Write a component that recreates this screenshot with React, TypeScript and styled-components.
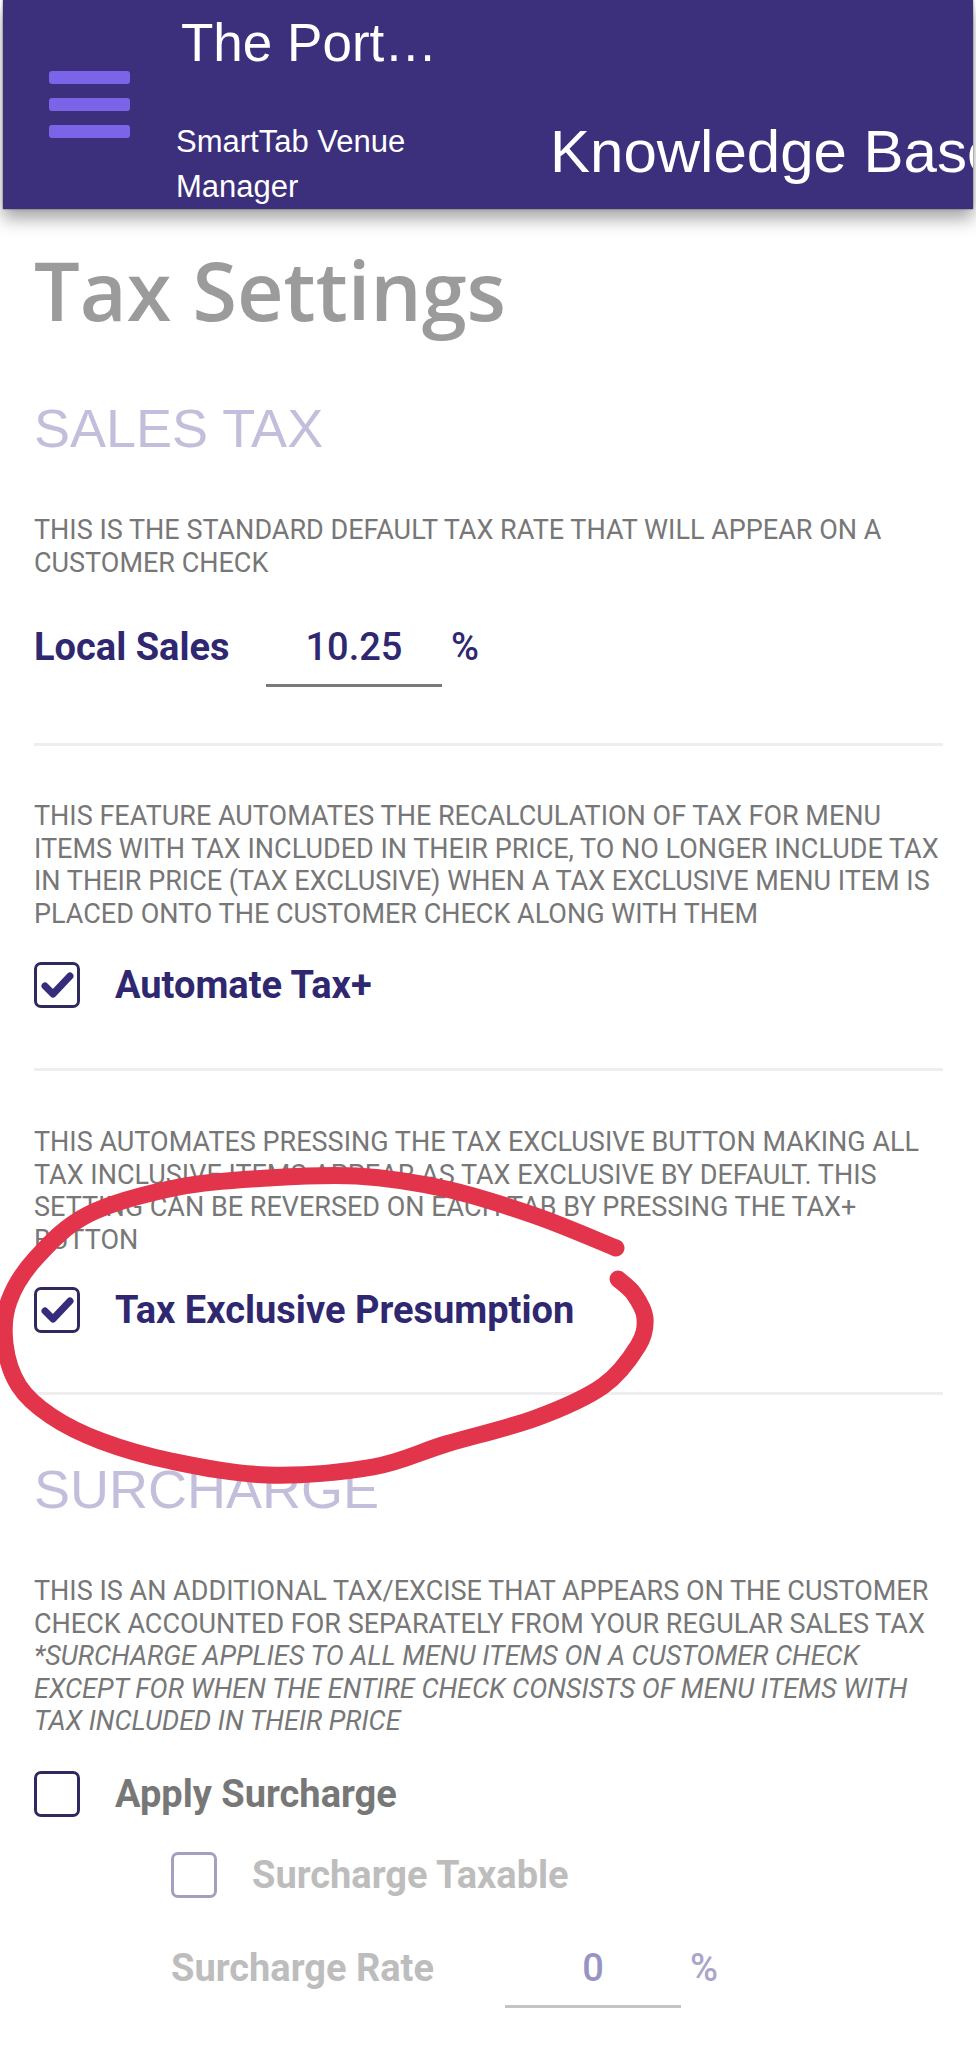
import React from 'react';
import styled, { createGlobalStyle } from 'styled-components';

const GlobalStyle = createGlobalStyle`
  html, body {
    margin: 0;
    padding: 0;
    background: #fff;
  }
  body {
    font-family: Roboto, 'Liberation Sans', sans-serif;
  }
`;

const navy = '#2f2870';

const Page = styled.div`
  position: relative;
  width: 976px;
  min-height: 2048px;
  overflow: hidden;
  background: #fff;
`;

const TopBar = styled.header`
  position: relative;
  z-index: 1;
  display: flex;
  align-items: center;
  height: 209px;
  margin: 0 3px;
  padding-left: 46px;
  background: #3c2f7b;
  color: #fff;
  font-family: 'Liberation Sans', Arial, sans-serif;
  box-shadow: 0 0 2px rgba(0, 0, 0, 0.55), 0 10px 16px rgba(0, 0, 0, 0.35);
  overflow: hidden;
`;

const Burger = styled.div`
  display: flex;
  flex-direction: column;
  gap: 14px;
  width: 81px;
  flex-shrink: 0;

  span {
    height: 13px;
    border-radius: 3px;
    background: #7b64e8;
  }
`;

const Brand = styled.div`
  display: flex;
  flex-direction: column;
  align-self: stretch;
  margin-left: 46px;
`;

const VenueName = styled.div`
  margin-top: 16px;
  padding-left: 5px;
  font-size: 53px;
  line-height: 53px;
  white-space: nowrap;
`;

const BrandRow = styled.div`
  display: flex;
  align-items: flex-start;
  margin-top: 50px;
`;

const Product = styled.div`
  width: 250px;
  flex-shrink: 0;
  font-size: 31px;
  line-height: 45px;
`;

const NavLink = styled.a`
  margin: 3px 0 0 124px;
  font-size: 60px;
  line-height: 60px;
  color: #fff;
  text-decoration: none;
  white-space: nowrap;
`;

const Main = styled.main`
  padding: 0 33px 40px 34px;
`;

const Heading = styled.h1`
  margin: 33px 0 0;
  font-family: 'Open Sans', sans-serif;
  font-weight: 600;
  font-size: 81px;
  line-height: 96px;
  color: #9b9b9b;
`;

const SectionTitle = styled.h2<{ $mt: number }>`
  margin: ${(p) => p.$mt}px 0 0;
  font-family: 'Liberation Sans', Arial, sans-serif;
  font-weight: 400;
  font-size: 54px;
  line-height: 60px;
  color: #c2bedb;
`;

const Help = styled.p<{ $mt?: number }>`
  margin: ${(p) => p.$mt ?? 55}px 0 0;
  font-family: Roboto, sans-serif;
  font-size: 27px;
  line-height: 32.5px;
  color: #777;
`;

const Footnote = styled.span`
  display: block;
  font-style: italic;
`;

const Divider = styled.hr<{ $mt: number }>`
  margin: ${(p) => p.$mt}px 0 0;
  height: 3px;
  border: 0;
  background: #eee;
`;

type Tone = 'active' | 'plain' | 'disabled';

const labelColor: Record<Tone, string> = {
  active: navy,
  plain: '#777',
  disabled: '#bdbdbd',
};

const RateRow = styled.div<{ $mt: number; $indent?: number }>`
  display: flex;
  align-items: flex-start;
  margin: ${(p) => p.$mt}px 0 0 ${(p) => p.$indent ?? 0}px;
  font-family: Roboto, sans-serif;
  font-size: 38px;
  line-height: 44px;
`;

const RateLabel = styled.span<{ $width: number; $tone: Tone }>`
  width: ${(p) => p.$width}px;
  flex-shrink: 0;
  font-weight: 700;
  color: ${(p) => labelColor[p.$tone]};
`;

const RateValue = styled.span<{ $tone: Tone }>`
  width: 176px;
  padding-bottom: 15px;
  text-align: center;
  font-weight: 500;
  color: ${(p) => (p.$tone === 'disabled' ? '#9893c4' : navy)};
  border-bottom: 3px solid ${(p) => (p.$tone === 'disabled' ? '#c4c4c4' : '#7a7a7a')};
`;

const Percent = styled.span<{ $tone: Tone }>`
  width: 46px;
  text-align: center;
  font-weight: 500;
  color: ${(p) => (p.$tone === 'disabled' ? '#a9a5cc' : navy)};
`;

const CheckRow = styled.label<{ $mt: number; $indent?: number }>`
  display: flex;
  align-items: center;
  gap: 35px;
  margin: ${(p) => p.$mt}px 0 0 ${(p) => p.$indent ?? 0}px;
  font-family: Roboto, sans-serif;
`;

const Box = styled.span<{ $tone: Tone }>`
  display: flex;
  width: 46px;
  height: 46px;
  box-sizing: border-box;
  flex-shrink: 0;
  border: 3px solid ${(p) => (p.$tone === 'disabled' ? '#a3a0bf' : '#2f2a5e')};
  border-radius: 7px;

  svg {
    width: 40px;
    height: 40px;
  }
`;

const CheckText = styled.span<{ $tone: Tone }>`
  font-weight: 700;
  font-size: 38px;
  line-height: 44px;
  color: ${(p) => labelColor[p.$tone]};
`;

const Scribble = styled.svg`
  position: absolute;
  top: 0;
  left: 0;
  z-index: 2;
  pointer-events: none;
`;

function Checkbox({ checked, tone, label, mt, indent }: {
  checked?: boolean;
  tone: Tone;
  label: string;
  mt: number;
  indent?: number;
}) {
  return (
    <CheckRow $mt={mt} $indent={indent}>
      <Box $tone={tone}>
        {checked && (
          <svg viewBox="0 0 40 40">
            <polyline
              points="8,21 16,29 33,11"
              fill="none"
              stroke="#352c7c"
              strokeWidth="7"
              strokeLinecap="round"
              strokeLinejoin="round"
            />
          </svg>
        )}
      </Box>
      <CheckText $tone={tone}>{label}</CheckText>
    </CheckRow>
  );
}

function Rate({ label, value, labelWidth, tone, mt, indent }: {
  label: string;
  value: string;
  labelWidth: number;
  tone: Tone;
  mt: number;
  indent?: number;
}) {
  return (
    <RateRow $mt={mt} $indent={indent}>
      <RateLabel $width={labelWidth} $tone={tone}>{label}</RateLabel>
      <RateValue $tone={tone}>{value}</RateValue>
      <Percent $tone={tone}>%</Percent>
    </RateRow>
  );
}

// marker loop drawn around the presumption option
const loop: [number, number][] = [
  [616, 1248], [536, 1216], [446, 1189], [357, 1176], [268, 1178],
  [179, 1187], [89, 1214], [36, 1258], [9, 1301], [5, 1344],
  [19, 1386], [51, 1416], [101, 1441], [171, 1461], [268, 1475],
  [373, 1467], [446, 1444], [536, 1418], [603, 1386], [638, 1346],
  [645, 1318], [634, 1294], [618, 1279],
];

function smoothPath(pts: [number, number][]): string {
  let d = `M ${pts[0][0]} ${pts[0][1]}`;
  for (let i = 0; i < pts.length - 1; i++) {
    const p0 = pts[i - 1] ?? pts[i];
    const p1 = pts[i];
    const p2 = pts[i + 1];
    const p3 = pts[i + 2] ?? p2;
    const c1x = p1[0] + (p2[0] - p0[0]) / 6;
    const c1y = p1[1] + (p2[1] - p0[1]) / 6;
    const c2x = p2[0] - (p3[0] - p1[0]) / 6;
    const c2y = p2[1] - (p3[1] - p1[1]) / 6;
    d += ` C ${c1x} ${c1y} ${c2x} ${c2y} ${p2[0]} ${p2[1]}`;
  }
  return d;
}

export default function App() {
  return (
    <Page>
      <GlobalStyle />
      <TopBar>
        <Burger>
          <span />
          <span />
          <span />
        </Burger>
        <Brand>
          <VenueName>The Port…</VenueName>
          <BrandRow>
            <Product>SmartTab Venue Manager</Product>
            <NavLink href="#">Knowledge Base</NavLink>
          </BrandRow>
        </Brand>
      </TopBar>

      <Main>
        <Heading>Tax Settings</Heading>

        <SectionTitle $mt={60}>SALES TAX</SectionTitle>
        <Help $mt={56}>THIS IS THE STANDARD DEFAULT TAX RATE THAT WILL APPEAR ON A CUSTOMER CHECK</Help>
        <Rate label="Local Sales" value="10.25" labelWidth={232} tone="active" mt={46} />

        <Divider $mt={56} />
        <Help $mt={54}>
          THIS FEATURE AUTOMATES THE RECALCULATION OF TAX FOR MENU ITEMS WITH TAX INCLUDED IN THEIR
          PRICE, TO NO LONGER INCLUDE TAX IN THEIR PRICE (TAX EXCLUSIVE) WHEN A TAX EXCLUSIVE MENU
          ITEM IS PLACED ONTO THE CUSTOMER CHECK ALONG WITH THEM
        </Help>
        <Checkbox checked tone="active" label="Automate Tax+" mt={32} />

        <Divider $mt={60} />
        <Help>
          THIS AUTOMATES PRESSING THE TAX EXCLUSIVE BUTTON MAKING ALL TAX INCLUSIVE ITEMS APPEAR AS
          TAX EXCLUSIVE BY DEFAULT. THIS SETTING CAN BE REVERSED ON EACH TAB BY PRESSING THE TAX+
          BUTTON
        </Help>
        <Checkbox checked tone="active" label="Tax Exclusive Presumption" mt={31} />

        <Divider $mt={59} />
        <SectionTitle $mt={64}>SURCHARGE</SectionTitle>
        <Help $mt={56}>
          THIS IS AN ADDITIONAL TAX/EXCISE THAT APPEARS ON THE CUSTOMER CHECK ACCOUNTED FOR
          SEPARATELY FROM YOUR REGULAR SALES TAX
          <Footnote>
            *SURCHARGE APPLIES TO ALL MENU ITEMS ON A CUSTOMER CHECK EXCEPT FOR WHEN THE ENTIRE
            CHECK CONSISTS OF MENU ITEMS WITH TAX INCLUDED IN THEIR PRICE
          </Footnote>
        </Help>
        <Checkbox tone="plain" label="Apply Surcharge" mt={33} />
        <Checkbox tone="disabled" label="Surcharge Taxable" mt={35} indent={137} />
        <Rate label="Surcharge Rate" value="0" labelWidth={334} tone="disabled" mt={48} indent={137} />
      </Main>

      <Scribble width="976" height="2048" viewBox="0 0 976 2048">
        <path
          d={smoothPath(loop)}
          fill="none"
          stroke="#e2344a"
          strokeWidth="17"
          strokeLinecap="round"
          strokeLinejoin="round"
        />
      </Scribble>
    </Page>
  );
}
